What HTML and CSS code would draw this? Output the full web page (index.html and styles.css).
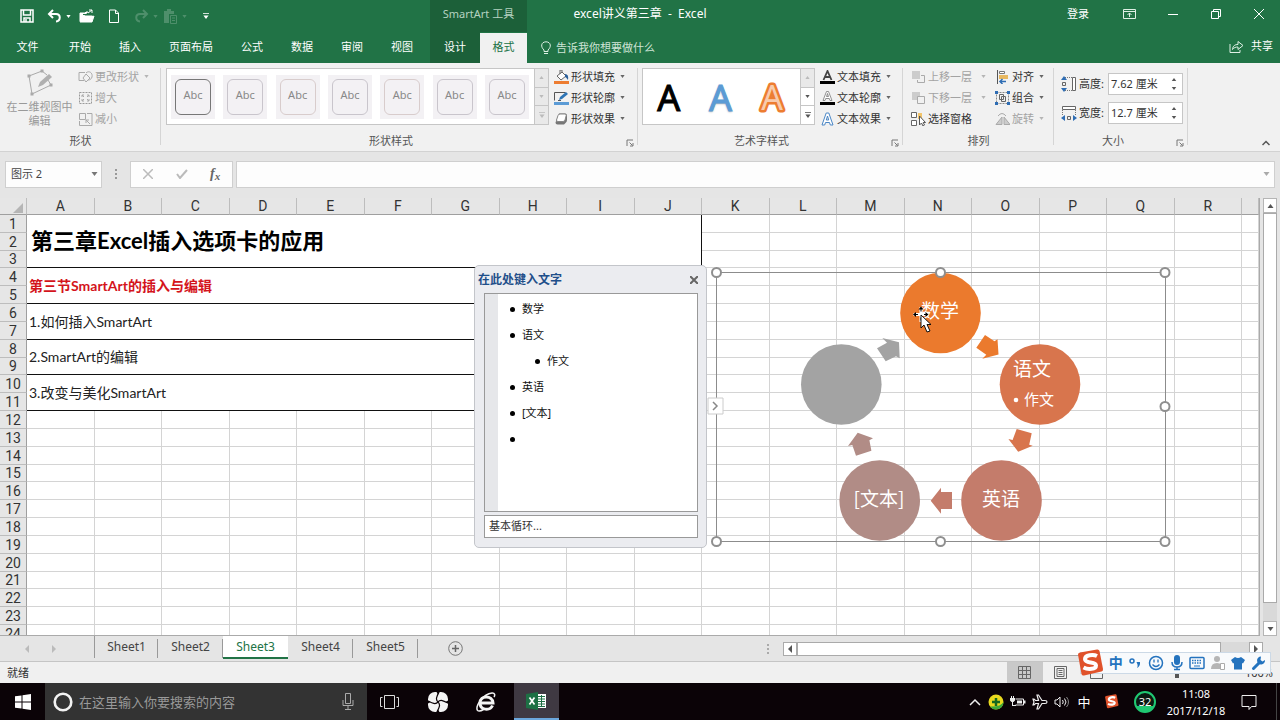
FILE: index.html
```html
<!DOCTYPE html>
<html lang="zh-CN">
<head>
<meta charset="utf-8">
<title>excel讲义第三章 - Excel</title>
<link rel="stylesheet" href="styles.css">
</head>
<body>
<svg class="sprite" aria-hidden="true">
  <symbol id="launcher" viewBox="0 0 8 8"><path d="M1 7V1h6M3.500 3.500l3 3M7 4v3H4" fill="none" stroke="#777"/></symbol>
  <symbol id="down" viewBox="0 0 7 4"><path d="M0.500 0h6L3.500 4z" fill="currentColor"/></symbol>
  <symbol id="up" viewBox="0 0 7 4"><path d="M0.500 4h6L3.500 0z" fill="currentColor"/></symbol>
  <symbol id="more" viewBox="0 0 7 7"><path d="M0 0.500h7" stroke="currentColor"/><path d="M0.500 3h6L3.500 7z" fill="currentColor"/></symbol>
  <symbol id="sogou" viewBox="0 0 28 28"><path d="M2 5.500Q2 4 4 3.500L21 0.500q2-.3 2.500 1.500l3.500 18q.3 2-1.500 2.500L8 26.500q-2 .3-2.500-1.500z" fill="#e0522b"/><path d="M21 7c-4-2-12-1-12 3.200 0 4.500 11 2 11 6.200 0 4-8 4.500-12.500 2" fill="none" stroke="#fff" stroke-width="4"/></symbol>
</svg>

<header class="header">
  <div class="titlebar">
    <div class="title-left">
      <div class="qat">
        <button class="q-btn q-save" aria-label="保存"><svg width="14" height="14" viewBox="0 0 14 14"><path d="M1 1h12v12H1zM3.500 1v5h7V1M4 13V9h6v4M6 10v3" fill="none" stroke="#fff" stroke-width="1.500"/></svg></button>
        <button class="q-btn q-undo" aria-label="撤消"><svg width="15" height="14" viewBox="0 0 15 14"><path d="M6 1L2 5l4 4M2.500 5H9c5 0 5 7 0 7.500" fill="none" stroke="#fff" stroke-width="2"/></svg><svg width="5" height="3"><use href="#down"/></svg></button>
        <button class="q-btn q-open" aria-label="打开"><svg width="16" height="14" viewBox="0 0 16 14"><path d="M1 12V4h5l1-1h2M3 7h12l-2 6H1z" fill="#fff" stroke="#fff"/><path d="M4 5.500h10V7" fill="none" stroke="#217346"/><path d="M9 4l4-3m-3 0h3v3" fill="none" stroke="#fff"/></svg></button>
        <button class="q-btn q-new" aria-label="新建"><svg width="12" height="14" viewBox="0 0 12 14"><path d="M1.500 1h6l3 3v9.500h-9zM7.500 1v3.500h3" fill="none" stroke="#fff"/></svg></button>
        <button class="q-btn q-redo dim" aria-label="恢复" disabled><svg width="15" height="14" viewBox="0 0 15 14"><path d="M9 1l4 4-4 4M12.500 5H6c-5 0-5 7 0 7.500" fill="none" stroke="#fff" stroke-width="2"/></svg><svg width="5" height="3"><use href="#down"/></svg></button>
        <button class="q-btn q-paste dim" aria-label="粘贴" disabled><svg width="15" height="15" viewBox="0 0 15 15"><path d="M1 2h10v3H6v9H1zM4 0h4v3H4z" fill="#fff"/><path d="M7.500 6.500h6v8h-6zM9 9h3M9 11.500h3" fill="none" stroke="#fff"/></svg><svg width="5" height="3"><use href="#down"/></svg></button>
        <button class="q-btn q-more" aria-label="自定义"><svg width="6" height="6"><use href="#more"/></svg></button>
      </div>
      <div class="context-title">SmartArt 工具</div>
    </div>
    <div class="doc-title">excel讲义第三章&nbsp; -&nbsp; Excel</div>
    <div class="window-ctl">
      <button class="login">登录</button>
      <button class="w-btn" aria-label="功能区显示选项"><svg width="13" height="10" viewBox="0 0 13 10"><path d="M.5.5h12v9H.5zM.5 2.500h12M6.500 8V4M4.500 6l2-2 2 2" fill="none" stroke="#dff0e5"/></svg></button>
      <button class="w-btn" aria-label="最小化"><svg width="10" height="10"><path d="M0 5.500h10" stroke="#fff"/></svg></button>
      <button class="w-btn" aria-label="还原"><svg width="10" height="10" viewBox="0 0 10 10"><path d="M.5 2.500h7v7h-7zM2.500 2.500v-2h7v7h-2" fill="none" stroke="#fff"/></svg></button>
      <button class="w-btn" aria-label="关闭"><svg width="10" height="10"><path d="M0 0l10 10M10 0L0 10" stroke="#fff"/></svg></button>
    </div>
  </div>
  <nav class="tabs">
    <button class="tab file">文件</button><button class="tab">开始</button><button class="tab">插入</button><button class="tab">页面布局</button><button class="tab">公式</button><button class="tab">数据</button><button class="tab">审阅</button><button class="tab">视图</button>
    <button class="tab context">设计</button><button class="tab active">格式</button>
    <button class="tell"><svg width="10" height="14" viewBox="0 0 10 14"><path d="M3 10.500V9C-.5 6-.2 1 5 .8 10.200 1 10.500 6 7 9v1.500zM3 12.500h4" fill="none" stroke="#dff0e5"/></svg>告诉我你想要做什么</button>
    <button class="share"><svg width="15" height="13" viewBox="0 0 15 13"><path d="M1 4v8.500h10V10M3.500 9.500C4 5.500 6 4.500 9 4.500V1.500l5 4-5 4V7C6.500 7 5 7.500 3.500 9.500z" fill="none" stroke="#dff0e5"/></svg>共享</button>
  </nav>
</header>

<section class="ribbon">
  <div class="group g-shape">
    <div class="group-body">
      <button class="big-btn" disabled>
        <svg width="27" height="28" viewBox="0 0 27 28"><path d="M3 7l13-5M3 7l3 18 19-9M16 2l5 4M22 11l3 5" fill="none" stroke="#aaa"/><path d="M1.500 5.500h3v3h-3zM14.500.500h3v3h-3zM4.500 23.500h3v3h-3zM23.500 14.500h3v3h-3z" fill="#aaa"/><path d="M12 18l2-5 9-8 3 3-9 8z" fill="#b0b0b0"/></svg>
        <span>在二维视图中编辑</span>
      </button>
      <div class="stack">
        <button class="row-btn" disabled><svg class="ic" viewBox="0 0 15 14"><path d="M6 10.500H1v-8h6M8 3c3-3 7 0 6 4-1 3-3 3-4 3M8 4l4 4-4 4-3-4z" fill="none" stroke="#aaa"/></svg>更改形状<svg class="caret"><use href="#down"/></svg></button>
        <button class="row-btn" disabled><svg class="ic" viewBox="0 0 15 14"><path d="M1.500 1.500h12v11h-12z" fill="none" stroke="#999" stroke-dasharray="2 1"/><path d="M4 4l2 2M11 4L9 6M4 10l2-2M11 10L9 8M4 6V4h2M9 4h2v2M4 8v2h2M9 10h2V8" fill="none" stroke="#aaa"/></svg>增大</button>
        <button class="row-btn" disabled><svg class="ic" viewBox="0 0 15 14"><path d="M9 1.500h5v12H1.500V9M1.500 1.500h6v6h-6zM8 8l4 4M8 11V8h3" fill="none" stroke="#aaa"/></svg>减小</button>
      </div>
    </div>
    <div class="group-name">形状</div>
  </div>
  <div class="group g-styles">
    <div class="group-body">
      <div class="gallery">
        <div class="tiles">
          <button class="tile t1">Abc</button><button class="tile">Abc</button><button class="tile t3">Abc</button><button class="tile">Abc</button><button class="tile t3">Abc</button><button class="tile">Abc</button><button class="tile">Abc</button>
        </div>
        <div class="spin off"><button aria-label="上"><svg width="5" height="3"><use href="#up"/></svg></button><button aria-label="下"><svg width="5" height="3"><use href="#down"/></svg></button><button aria-label="其他"><svg width="6" height="6"><use href="#more"/></svg></button></div>
      </div>
      <div class="stack">
        <button class="row-btn"><svg class="ic" viewBox="0 0 15 14"><path d="M0 11h15v3H0z" fill="#ed7d31"/><path d="M3 6l5-4 4 4-5 4zM6 4V0h2v3" fill="#fff" stroke="#666"/><path d="M11 4q4 0 3 6-2-3-3-3z" fill="#2b5f99"/></svg>形状填充<svg class="caret"><use href="#down"/></svg></button>
        <button class="row-btn"><svg class="ic" viewBox="0 0 15 14"><path d="M0 11h15v3H0z" fill="#5b9bd5"/><path d="M.5 9.500v-8h11M4 9.500h3" fill="none" stroke="#555"/><path d="M5 9l1-3 6-5 2 2-6 5z" fill="#2e75b6"/></svg>形状轮廓<svg class="caret"><use href="#down"/></svg></button>
        <button class="row-btn"><svg class="ic" viewBox="0 0 15 14"><path d="M5 1.500h6q2 0 2 2V8q0 2-1.500 3l-1.500 1.500H3.500q-2 0-2-2z" fill="#777"/><path d="M6 2h5q1.500 0 1.200 1.500L11 8q-.5 1.500-2 1.500H4Q2.200 9.500 2.500 8L4 3.500Q4.500 2 6 2z" fill="#fff" stroke="#888"/></svg>形状效果<svg class="caret"><use href="#down"/></svg></button>
      </div>
    </div>
    <div class="group-name">形状样式</div>
    <svg class="launch"><use href="#launcher"/></svg>
  </div>
  <div class="group g-wordart">
    <div class="group-body">
      <div class="gallery">
        <div class="letters"><button class="wa black">A</button><button class="wa blue">A</button><button class="wa orange"><svg width="36" height="40" viewBox="0 0 36 40"><text x="18" y="32" text-anchor="middle">A</text></svg></button></div>
        <div class="spin"><button class="gray" aria-label="上"><svg width="5" height="3"><use href="#up"/></svg></button><button aria-label="下"><svg width="5" height="3"><use href="#down"/></svg></button><button aria-label="其他"><svg width="6" height="6"><use href="#more"/></svg></button></div>
      </div>
      <div class="stack">
        <button class="row-btn"><svg class="ic" viewBox="0 0 15 14"><path d="M0 11h15v3H0z"/><path d="M3.500 10L7.500 1l4 9M5 7h5" fill="none" stroke="#444" stroke-width="1.800"/></svg>文本填充<svg class="caret"><use href="#down"/></svg></button>
        <button class="row-btn"><svg class="ic" viewBox="0 0 15 14"><path d="M0 11h15v3H0z"/><path d="M3 9.500L6.500.5h2l3.500 9H10L9.300 7.500H5.700L5 9.500zM6.500 5.500h2l-1-3z" fill="#fff" stroke="#777" stroke-width=".8"/></svg>文本轮廓<svg class="caret"><use href="#down"/></svg></button>
        <button class="row-btn"><svg class="ic" viewBox="0 0 15 14"><path d="M2 13L6.200 1h2.600L13 13h-2.700l-.8-2.500H5.500L4.700 13zM6.300 8h2.400L7.500 4z" fill="#fff" stroke="#4a86c5"/></svg>文本效果<svg class="caret"><use href="#down"/></svg></button>
      </div>
    </div>
    <div class="group-name">艺术字样式</div>
    <svg class="launch"><use href="#launcher"/></svg>
  </div>
  <div class="group g-arrange">
    <div class="group-body">
      <div class="stack">
        <button class="row-btn" disabled><svg class="ic" viewBox="0 0 15 14"><path d="M1 1h8v8H1z" fill="#ccc"/><path d="M10 5.500h3.500v7h-7V10" fill="none" stroke="#aaa"/></svg>上移一层<svg class="caret far"><use href="#down"/></svg></button>
        <button class="row-btn" disabled><svg class="ic" viewBox="0 0 15 14"><path d="M1 1h8v8H1z" fill="#ccc"/><path d="M6.500 5.500h7v7h-7z" fill="#f1f1f1" stroke="#aaa"/></svg>下移一层<svg class="caret far"><use href="#down"/></svg></button>
        <button class="row-btn"><svg class="ic" viewBox="0 0 15 14"><path d="M7 1h4v6H7z" fill="#f3c56b"/><path d="M.5.5h5v5h-5zM.5 8.500h5v5h-5z" fill="#fff" stroke="#666"/><path d="M8.500 4v9l2-2 1.500 3 1.500-1-1.300-2.500h2.300z" fill="#fff" stroke="#555"/></svg>选择窗格</button>
      </div>
      <div class="stack second">
        <button class="row-btn"><svg class="ic" viewBox="0 0 15 14"><path d="M2.500 0v14" stroke="#555"/><path d="M4.500 1.500h5v2h-5z" fill="#fff" stroke="#777"/><path d="M4 5h9v4H4z" fill="#e8b860"/><path d="M11 11.500H5M7.500 9L5 11.500 7.500 14" fill="none" stroke="#2e6db4" stroke-width="1.500"/></svg>对齐<svg class="caret"><use href="#down"/></svg></button>
        <button class="row-btn"><svg class="ic" viewBox="0 0 15 14"><path d="M1.500 1.500h12v11h-12z" fill="none" stroke="#888" stroke-dasharray="2 1"/><path d="M4.500 3.500h4v5h-4zM6.500 5.500h4v5h-4z" fill="none" stroke="#666"/><path d="M0 0h3v3H0zM12 0h3v3h-3zM0 11h3v3H0zM12 11h3v3h-3z" fill="#2e6db4"/></svg>组合<svg class="caret"><use href="#down"/></svg></button>
        <button class="row-btn" disabled><svg class="ic" viewBox="0 0 15 14"><path d="M1 12.500h6V5zM9 5v7.500h6z" fill="#ccc" stroke="#aaa"/><path d="M3 4q4-5 8 0" fill="none" stroke="#aaa"/></svg>旋转<svg class="caret"><use href="#down"/></svg></button>
      </div>
    </div>
    <div class="group-name">排列</div>
  </div>
  <div class="group g-size">
    <div class="group-body fields">
      <div class="field"><label for="h"><svg width="16" height="16" viewBox="0 0 16 16"><path d="M11.500 1.500h3v13h-3z" fill="#fff" stroke="#666"/><path d="M4 1.500h7M4 14.500h7" stroke="#777" stroke-dasharray="1 1"/><path d="M1.500 6.500h3v3h-3z" fill="none" stroke="#666"/><path d="M3 0l3 4H0zM3 16l3-4H0z" fill="#2e6db4"/></svg>高度:</label><span class="num"><input id="h" value="7.62 厘米"><span class="arrows"><svg width="6" height="3"><use href="#up"/></svg><svg width="6" height="3"><use href="#down"/></svg></span></span></div>
      <div class="field"><label for="w"><svg width="16" height="16" viewBox="0 0 16 16"><path d="M1.500 1.500h13v3h-13z" fill="#fff" stroke="#666"/><path d="M1.500 5v5M14.500 5v5" stroke="#777" stroke-dasharray="1 1"/><path d="M6.500 11.500h3v3h-3z" fill="none" stroke="#666"/><path d="M0 13l4-3v6zM16 13l-4-3v6z" fill="#2e6db4"/></svg>宽度:</label><span class="num"><input id="w" value="12.7 厘米"><span class="arrows"><svg width="6" height="3"><use href="#up"/></svg><svg width="6" height="3"><use href="#down"/></svg></span></span></div>
    </div>
    <div class="group-name">大小</div>
    <svg class="launch"><use href="#launcher"/></svg>
  </div>
  <button class="collapse" aria-label="折叠功能区"><svg width="8" height="6"><path d="M.5 5L4 1.500 7.500 5" fill="none" stroke="#555" stroke-width="1.500"/></svg></button>
</section>

<section class="formula-row">
  <div class="name-box"><input aria-label="名称框" value="图示 2"><svg width="7" height="4"><use href="#down"/></svg></div>
  <svg class="dots" width="2" height="10"><path d="M1 0v10" stroke="#999" stroke-width="2" stroke-dasharray="2 2"/></svg>
  <div class="fx-box">
    <button aria-label="取消"><svg width="10" height="10"><path d="M0 0l10 10M10 0L0 10" stroke="#bbb" stroke-width="1.500"/></svg></button>
    <button aria-label="输入"><svg width="12" height="10"><path d="M1 5l3 4 7-8" fill="none" stroke="#bbb" stroke-width="2"/></svg></button>
    <button class="fx">f<small>x</small></button>
  </div>
  <div class="formula"><input aria-label="编辑栏"><svg width="7" height="4"><use href="#down"/></svg></div>
</section>

<main class="workbook">
  <div class="grid-wrap">
    <table class="sheet" id="sheet"></table>

    <svg class="diagram" width="480" height="300" viewBox="0 0 480 300">
      <path d="M16.500 17.500h449v269h-449z" fill="none" stroke="#8c8c8c"/>
      <g fill="#eb7a2d"><circle cx="240.500" cy="58" r="40.300"/><path d="M285 80l9.500 6.300 3-2 1 15.200-16.200 4.200 4-4-10-7z"/></g>
      <g fill="#d8754d"><circle cx="340" cy="129.500" r="40.300"/><path d="M316.700 174l15 4.300-2.500 11.500 3.500 1-14.500 6-9.800-12.800 4.200 1z"/></g>
      <g fill="#c47c6b"><circle cx="301.500" cy="245.500" r="40.300"/><path d="M252 237v17h-11v4.700L230.700 245.700 241 232.700V237z"/></g>
      <g fill="#b18c86"><circle cx="179.700" cy="245.500" r="40.300"/><path d="M157.700 177.700l15.300 5.600-3.600 2 2 10.400-15.400 5-3.700-10.700-4.300 1z"/></g>
      <g fill="#a3a3a3"><circle cx="141.300" cy="129.500" r="40.300"/><path d="M182.300 83l16.700 4.300.7 16-3.700-2-10.300 5-8.700-13 10-5.600z"/></g>
      <g class="node-text">
        <text x="240" y="63" text-anchor="middle">数学</text>
        <text x="313" y="121">语文</text>
        <circle cx="316" cy="145" r="2.300"/><text class="sub" x="324" y="150">作文</text>
        <text x="301" y="251" text-anchor="middle">英语</text>
        <text x="179" y="251" text-anchor="middle">[文本]</text>
      </g>
      <path d="M8 143h15v16H8z" fill="#fff" stroke="#ccc"/><path d="M13 147l4 4-4 4" fill="none" stroke="#888" stroke-width="1.500"/>
      <g fill="#fff" stroke="#8f8f8f" stroke-width="2"><circle cx="16.500" cy="17.500" r="4.500"/><circle cx="240.500" cy="17.500" r="4.500"/><circle cx="465" cy="17.500" r="4.500"/><circle cx="465" cy="151.500" r="4.500"/><circle cx="16.500" cy="286.500" r="4.500"/><circle cx="240.500" cy="286.500" r="4.500"/><circle cx="465" cy="286.500" r="4.500"/></g>
      <path d="M213.500 59.500h15M221 52v15" stroke="#fff" stroke-width="3"/>
      <path d="M215 59.500h12M221 53.500v12" stroke="#000" stroke-dasharray="3 6 3"/>
      <path d="M213 59.500l3-2.500v5zM228.500 59.500l-3-2.500v5zM221 51.500l-2.500 3h5z"/>
      <path d="M221 60v13l3-3 3 7 3-1-3-6.500h4z" fill="#fff" stroke="#000" stroke-width=".9"/>
    </svg>

    <aside class="text-pane">
      <div class="pane-head"><span>在此处键入文字</span><button aria-label="关闭"><svg width="8" height="8"><path d="M0 0l8 8M8 0L0 8" stroke="#666" stroke-width="2"/></svg></button></div>
      <ul class="pane-list"><li>数学</li><li>语文</li><li class="sub-item">作文</li><li>英语</li><li>[文本]</li><li></li></ul>
      <div class="pane-foot">基本循环...</div>
    </aside>
  </div>
  <div class="vscroll">
    <button aria-label="向上"><svg width="7" height="4"><use href="#up"/></svg></button>
    <div class="v-thumb"></div><div class="v-space"></div>
    <button aria-label="向下"><svg width="7" height="4"><use href="#down"/></svg></button>
  </div>
</main>

<footer class="sheet-bar">
  <div class="sheet-nav"><svg width="5" height="8"><path d="M4 0v8L0 4z" fill="#bbb"/></svg><svg width="5" height="8"><path d="M0 0v8l4-4z" fill="#bbb"/></svg></div>
  <button class="sheet-tab">Sheet1</button><button class="sheet-tab">Sheet2</button><button class="sheet-tab on">Sheet3</button><button class="sheet-tab">Sheet4</button><button class="sheet-tab">Sheet5</button>
  <button class="add" aria-label="新工作表"><svg width="15" height="15"><circle cx="7.500" cy="7.500" r="6.800" fill="none" stroke="#777"/><path d="M4 7.500h7M7.500 4v7" stroke="#666" stroke-width="1.500"/></svg></button>
  <svg class="dots right" width="2" height="10"><path d="M1 0v10" stroke="#aaa" stroke-width="2" stroke-dasharray="2 2"/></svg>
  <div class="hscroll">
    <button aria-label="向左"><svg width="5" height="8"><path d="M4 0v8L0 4z" fill="#555"/></svg></button><div class="h-thumb"></div><div class="h-space"></div><button aria-label="向右"><svg width="5" height="8"><path d="M0 0v8l4-4z" fill="#555"/></svg></button>
  </div>
</footer>

<div class="status">
  <span>就绪</span>
  <div class="views">
    <button class="view on" aria-label="普通"><svg width="13" height="13"><path d="M.5.5h12v12H.5zM4.500 0v13M8.500 0v13M0 4.500h13M0 8.500h13" fill="none" stroke="#666"/></svg></button>
    <button class="view" aria-label="页面布局"><svg width="13" height="13"><path d="M.5.5h12v12H.5zM3 2.500h7v8H3zM4.500 4.500h4M4.500 6.500h4M4.500 8.500h4" fill="none" stroke="#666"/></svg></button>
    <button class="view" aria-label="分页预览"><svg width="13" height="13"><path d="M.5.5h12v12H.5z" fill="none" stroke="#666"/></svg></button>
  </div>
  <svg class="zoom-bar" width="128" height="10"><path d="M0 5.500h8M14 5.500h106M122 5.500h6" stroke="#888"/><path d="M66 1h4v9h-4z" fill="#555"/></svg>
  <span class="zoom">100%</span>
</div>

<div class="ime">
  <svg class="ime-logo" width="28" height="28"><use href="#sogou"/></svg>
  <b>中</b>
  <svg viewBox="0 0 16 16"><circle cx="5" cy="6" r="2" fill="none" stroke="#2473be" stroke-width="1.500"/><path d="M9.500 7h3.500q.5 4-3 6 1-2 .5-3.500z" fill="#2473be"/></svg>
  <svg viewBox="0 0 16 16"><circle cx="8" cy="8" r="6.500" fill="none" stroke="#2473be" stroke-width="1.500"/><path d="M6 4.500v3M10 4.500v3M4.500 9.500q3.500 4 7 0" fill="none" stroke="#2473be" stroke-width="1.300"/></svg>
  <svg viewBox="0 0 16 16"><rect x="5" y="0" width="6" height="10" rx="3" fill="#2473be"/><path d="M3 7q0 5 5 5t5-5M8 12v3M5 14.500h6" fill="none" stroke="#2473be" stroke-width="1.500"/></svg>
  <svg viewBox="0 0 16 16"><rect x="1" y="2.500" width="14" height="11" rx="1" fill="none" stroke="#2473be" stroke-width="1.500"/><path d="M3 5.500h10M3 8h10" stroke="#2473be" stroke-width="1.500" stroke-dasharray="1.500 1"/><path d="M5 11h6" stroke="#2473be"/></svg>
  <svg viewBox="0 0 16 16"><circle cx="7" cy="4" r="3" fill="#b5b5b5"/><path d="M1 14q0-6 6-6t6 6z" fill="#b5b5b5"/><path d="M10.500 8.500h4v6h-4z" fill="#fff" stroke="#aaa"/></svg>
  <svg viewBox="0 0 16 16"><path d="M5 2q3 2 6 0l4 3-2 3.500-1-.5v6.500H4V8l-1 .5L1 5z" fill="#2473be"/></svg>
  <svg viewBox="0 0 16 16"><path d="M2.500 13.500L9 7" stroke="#2473be" stroke-width="3" stroke-linecap="round"/><path d="M14 5a4 4 0 1 1-4-3.500L9.500 5l2 1.500z" fill="#2473be"/></svg>
</div>

<div class="taskbar">
  <button class="start" aria-label="开始"><svg width="16" height="16"><path d="M0 2.300L6.500 1.400v6.100H0zM7.500 1.200L16 0v7.500H7.500zM0 8.500h6.500v6.100L0 13.700zM7.500 8.500H16V16l-8.500-1.200z" fill="#fff"/></svg></button>
  <div class="search">
    <svg width="20" height="20"><circle cx="10" cy="10" r="8.300" fill="none" stroke="#f2f2f2" stroke-width="2.600"/></svg>
    <input aria-label="搜索" placeholder="在这里输入你要搜索的内容">
    <svg width="12" height="17" viewBox="0 0 12 17"><path d="M3.500.5h5v10h-5zM1 7v5.500h10V7M6 13v3M3 16.500h6" fill="none" stroke="#aaa"/></svg>
  </div>
  <button class="task" aria-label="任务视图"><svg width="19" height="14"><path d="M4.500.5h10v13h-10zM2.500 2.500h-2v9h2M16.500 2.500h2v9h-2" fill="none" stroke="#ddd"/></svg></button>
  <button class="task" aria-label="浏览器"><svg width="20" height="20" viewBox="0 0 20 20"><rect width="20" height="20" rx="7" fill="#f4f4f4"/><path d="M10 10C7 7.500 9 4 11 0M10 10c2.500-3 6-1 10 1M10 10c3 2.500 1 6-1 10M10 10c-2.500 3-6 1-10-1" fill="none" stroke="#0b0307" stroke-width="1.200"/><path d="M8.500 0h3L10 2.500zM20 8.500v3L17.500 10zM8.500 20h3L10 17.500zM0 8.500v3L2.500 10z" fill="#0b0307"/></svg></button>
  <button class="task" aria-label="Internet Explorer"><svg width="20" height="20" viewBox="0 0 20 20"><path d="M16.500 13.500C14 19 4 18.500 4 11c0-8 12.500-8 13 0H5" fill="none" stroke="#f4f4f4" stroke-width="3"/><path d="M1.500 18.500C-1 14 7 2 16 1c3-.2 3.200 2 2 4M1.500 18.500q2 1.500 6-1" fill="none" stroke="#f4f4f4" stroke-width="1.500"/></svg></button>
  <button class="task excel" aria-label="Excel"><svg width="21" height="18" viewBox="0 0 21 18"><path d="M11 2h9v14h-9z" fill="#fff"/><path d="M12 4.500h7M12 7h7M12 9.500h7M12 12h7M12 14.500h7M15.500 3v12" stroke="#1d7044"/><path d="M0 2l12-2v18L0 16z" fill="#1d7044"/><path d="M3.500 5.500l5 7M8.500 5.500l-5 7" stroke="#fff" stroke-width="1.700"/></svg></button>
  <div class="tray">
    <svg width="12" height="8"><path d="M1 7l5-5 5 5" fill="none" stroke="#eee" stroke-width="1.500"/></svg>
    <svg width="16" height="16"><circle cx="8" cy="8" r="7.500" fill="#e8d91e"/><path d="M2 12.500A7.500 7.500 0 0 0 15.500 8q-3 5-13.500 4.500z" fill="#3aa83a"/><path d="M8 4v8M4 8h8" stroke="#14691f" stroke-width="2.500"/></svg>
    <svg width="16" height="12"><path d="M5.500 3h8v6h-8" fill="none" stroke="#eee"/><path d="M7 4.500h5v3H7zM14 4.500h1.500v3H14zM0 2h5v2.500L3.500 6h-2L0 4.500zM1 0h1v2H1zM3 0h1v2H3zM2 6h1v3h3v1H2z" fill="#eee"/></svg>
    <svg width="16" height="16"><path d="M15 8q0-1.500-2-1.500h-3L6.500 1H5l1.500 5.500h-3L2 5H1l1 3-1 3h1l1.500-1.500h3L5 15h1.500L10 9.500h3q2 0 2-1.500z" fill="none" stroke="#eee" stroke-width="1.200"/></svg>
    <svg width="16" height="12"><path d="M1 4h2l3-3v10L3 8H1zM8.500 4q1.500 2 0 4M10.500 2.500q3 3.500 0 7" fill="none" stroke="#eee"/><path d="M12.500 1q4 5 0 10" fill="none" stroke="#888"/></svg>
    <span class="lang">中</span>
    <svg class="tray-s" width="15" height="15" viewBox="0 0 28 28"><use href="#sogou" width="28" height="28"/></svg>
    <div class="badge">32</div>
    <div class="clock"><div>11:08</div><div>2017/12/18</div></div>
    <svg width="16" height="16"><path d="M1 1.500h14v11h-4.500l-2.500 3v-3H1z" fill="none" stroke="#eee"/></svg>
  </div>
</div>
<script src="script.js"></script>
</body>
</html>
```
FILE: styles.css
```css
* { box-sizing: border-box; }
body {
  margin: 0; height: 100vh; display: flex; flex-direction: column; overflow: hidden;
  font: 11px/16px "Noto Sans", "Noto Sans CJK SC", sans-serif; color: #333; background: #e5e5e5;
}
button, input { font: inherit; color: inherit; background: none; border: 0; padding: 0; margin: 0; outline: 0; }
svg { display: block; flex: none; }
.sprite { position: absolute; width: 0; height: 0; }

/* Header */
.header { background: #217346; color: #fff; flex: none; }
.titlebar { display: grid; grid-template-columns: 1fr auto 1fr; height: 32px; }
.title-left { display: flex; }
.qat { width: 430px; display: flex; align-items: center; padding-left: 20px; }
.q-btn { display: flex; align-items: center; gap: 4px; height: 28px; }
.q-undo { margin-left: 13px; }
.q-open { margin-left: 8px; }
.q-new { margin-left: 13px; }
.q-redo { margin-left: 14px; }
.q-paste { margin-left: 5px; }
.q-more { margin-left: 16px; }
.dim { opacity: .2; }
.context-title { width: 97px; background: #1c6039; color: #b5d3c1; text-align: center; padding-top: 6px; }
.doc-title { padding-top: 6px; font-size: 12px; }
.window-ctl { display: flex; justify-content: flex-end; height: 28px; }
.login { width: 48px; }
.w-btn { width: 43px; display: flex; align-items: center; justify-content: center; }
.w-btn:nth-child(2) { margin-left: 6px; }
.tabs { display: flex; height: 31px; }
.tab { padding: 0 14px 2px; }
.tab.file { width: 55px; }
.tab.context { margin-left: 3px; background: #1c6039; }
.tab.active { background: #f1f1f1; color: #217346; margin-top: 1px; width: 47px; padding: 0 0 3px; }
.tell, .share { display: flex; align-items: center; gap: 5px; color: #cfe4d6; margin-left: 14px; }
.share { margin-left: auto; gap: 7px; color: #fff; padding: 0 7px 3px 0; }

/* Ribbon */
.ribbon { display: flex; height: 89px; flex: none; background: #f1f1f1; border-bottom: 1px solid #d2d2d2; position: relative; }
.group { position: relative; display: flex; flex-direction: column; padding: 3px 5px 0; }
.group::after { content: ""; position: absolute; right: 0; top: 5px; bottom: 6px; border-right: 1px solid #d5d5d5; }
.group-body { display: flex; flex: 1; }
.group-name { text-align: center; color: #555; height: 18px; }
.g-styles .group-name, .g-wordart .group-name { padding-right: 17px; }
.launch { position: absolute; right: 4px; bottom: 4px; width: 8px; height: 8px; }
.g-shape { width: 161px; }
.g-styles { width: 477px; }
.g-wordart { width: 265px; padding-left: 4px; }
.g-arrange { width: 151px; }
.g-size { width: 134px; }
.big-btn { width: 69px; display: flex; flex-direction: column; align-items: center; gap: 3px; line-height: 14px; padding-top: 3px; color: #999; }
.stack { display: flex; flex-direction: column; padding-left: 5px; }
.g-shape .stack { padding-left: 4px; }
.g-arrange .stack:first-child { padding-left: 3px; }
.stack.second { margin-left: 4px; }
.row-btn { display: flex; align-items: center; height: 21px; gap: 2px; white-space: nowrap; }
.row-btn:disabled { color: #a3a3a3; }
.ic { width: 15px; height: 14px; }
.caret { width: 5px; height: 3px; margin-left: 3px; color: #666; }
.row-btn:disabled .caret { color: #b5b5b5; }
.row-btn .caret.far { margin-left: 7px; }
.gallery { display: flex; height: 57px; margin-top: 2px; border: 1px solid #c6c6c6; background: #fff; }
.g-styles .gallery { width: 383px; }
.g-wordart .gallery { width: 173px; }
.tiles { flex: 1; display: flex; justify-content: space-between; align-items: center; padding: 0 5px 0 4px; }
.tile { width: 44px; height: 44px; border: 4px solid #f3f1f4; background: #f3f1f4; position: relative; color: #888; padding-bottom: 4px; }
.tile::after { content: ""; position: absolute; inset: 0; border: 1px solid #c9c5cc; border-radius: 6px; }
.tile.t1::after { border-color: #777; }
.tile.t3::after { border-color: #d8cccc; }
.spin { width: 14px; display: flex; flex-direction: column; border-left: 1px solid #c6c6c6; color: #555; }
.spin button { flex: 1; display: flex; align-items: center; justify-content: center; }
.spin button + button { border-top: 1px solid #c6c6c6; }
.spin.off, .spin .gray { background: #e9e9e9; color: #bbb; }
.letters { flex: 1; display: flex; padding-right: 2px; }
.wa { flex: 1; font-size: 36px; line-height: 50px; padding-top: 2px; }
.black { color: #000; -webkit-text-stroke: 1px #000; }
.blue { color: #5b9bd5; text-shadow: 0 1px 2px #aaa; -webkit-text-stroke: 1px #5b9bd5; }
.orange { display: flex; align-items: center; justify-content: center; }
.orange text { font-size: 34px; fill: #f8cbad; stroke: #ed7d31; stroke-width: 5px; stroke-linejoin: round; paint-order: stroke; }
.fields { flex-direction: column; gap: 7px; padding-top: 7px; }
.field { display: flex; justify-content: space-between; height: 22px; padding-left: 2px; }
.field label { display: flex; align-items: center; gap: 2px; }
.num { width: 75px; display: flex; align-items: center; border: 1px solid #c6c6c6; background: #fff; }
.num input { width: 58px; padding-left: 2px; }
.arrows { display: flex; flex-direction: column; gap: 6px; padding-left: 4px; color: #555; }
.fields + .group-name { padding-right: 16px; }
.collapse { margin-left: auto; align-self: flex-end; padding: 6px 10px 5px; }

/* Formula row */
.formula-row { display: flex; align-items: center; height: 46px; flex: none; padding: 0 5px 2px; }
.name-box, .fx-box, .formula { height: 27px; background: #fdfdfd; border: 1px solid #cfcfcf; display: flex; align-items: center; }
.name-box { width: 97px; padding: 0 4px 0 5px; color: #777; }
.name-box input { width: 80px; color: #444; }
.formula-row .dots { margin: 0 13px; }
.fx-box { width: 103px; }
.fx-box button { flex: 1; display: flex; justify-content: center; align-items: center; }
.fx { font: italic bold 14px "Liberation Serif", serif; color: #666; }
.fx small { font-size: 11px; padding-top: 3px; }
.formula { flex: 1; margin-left: 3px; padding-right: 4px; color: #aaa; }
.formula input { flex: 1; }

/* Worksheet */
.workbook { flex: 1; min-height: 0; display: flex; }
.grid-wrap { flex: 1; min-width: 0; position: relative; overflow: hidden; border-right: 1px solid #aaa; border-bottom: 1px solid #aaa; }
.sheet { table-layout: fixed; width: 100%; border-collapse: separate; border-spacing: 0; background: #fff; font: 14px/16px Lato, "Noto Sans CJK SC", sans-serif; color: #222; }
.sheet th, .sheet td { padding: 0; border: 0 solid #d4d4d4; border-width: 0 1px 1px 0; overflow: hidden; white-space: nowrap; }
.sheet .c-head { width: 27px; }
.sheet .c-last { width: 17px; }
.sheet tr { height: 18px; }
.sheet tbody tr:nth-child(6n+3) { height: 17px; }
.sheet thead tr { height: 17px; }
.sheet th { background: #e6e6e6; font-family: Roboto, sans-serif; font-weight: normal; border-color: #bdbdbd; color: #333; }
.sheet thead th { border-bottom-color: #9f9f9f; line-height: 15px; padding-top: 1px; }
.sheet tbody th { border-right-color: #9f9f9f; line-height: 16px; }
.corner svg { margin: 2px 3px 0 auto; }
.sheet .merged { border-color: #111; text-align: left; vertical-align: middle; padding-left: 2px; }
.sheet .heading { font-size: 22px; line-height: 28px; font-weight: bold; color: #000; padding-left: 4px; }
.sheet .section { font-weight: bold; color: #d4141c; }

.diagram { position: absolute; left: 700px; top: 57px; }
.node-text { fill: #fff; font: 19px "Noto Sans CJK SC", sans-serif; }
.node-text .sub { font-size: 15px; }

.text-pane { position: absolute; left: 474px; top: 67px; width: 233px; height: 283px; padding: 0 8px 9px 9px; display: flex; flex-direction: column; background: #ebecf0; border: 1px solid #c3c5ca; border-radius: 5px; }
.pane-head { display: flex; align-items: center; justify-content: space-between; height: 27px; margin-left: -6px; font-size: 12px; font-weight: bold; color: #1f4f8a; }
.pane-list { flex: 1; list-style: none; margin: 0 0 3px; padding: 2px 0 0 23px; border: 1px solid #999; background: linear-gradient(90deg, #e6e7ea 13px, #fff 13px); color: #111; }
.pane-list li { height: 26px; line-height: 26px; display: flex; align-items: center; }
.pane-list li::before { content: ""; width: 5px; height: 5px; border-radius: 50%; background: #000; margin: 0 7px 0 2px; }
.pane-list .sub-item { padding-left: 25px; }
.pane-foot { height: 23px; line-height: 20px; border: 1px solid #999; background: #fff; padding-left: 4px; }

.vscroll { width: 20px; display: flex; flex-direction: column; align-items: center; color: #555; }
.vscroll button { width: 14px; height: 15px; background: #fff; border: 1px solid #b5b5b5; display: flex; align-items: center; justify-content: center; flex: none; }
.v-thumb { width: 14px; flex: 391; background: #fff; border: 1px solid #aaa; }
.v-space { width: 14px; flex: 18; background: #d9d9d9; }

/* Sheet tabs */
.sheet-bar { display: flex; height: 26px; flex: none; border-bottom: 1px solid #c5c5c5; }
.sheet-nav { width: 94px; display: flex; align-items: center; gap: 22px; padding-left: 25px; }
.sheet-tab { width: 65px; height: 22px; font-size: 12px; color: #444; background: linear-gradient(#999, #999) right 3px / 1px 100% no-repeat; }
.sheet-nav + .sheet-tab { width: 64px; border-left: 1px solid #999; }
.sheet-tab.on { background: #fff; color: #217346; border-bottom: 2px solid #217346; height: 23px; }
.add { margin-left: 30px; }
.dots.right { margin: auto 14px auto auto; }
.hscroll { width: 38%; max-width: 480px; height: 14px; margin: 6px 17px 0 0; display: flex; }
.hscroll button { width: 14px; background: #fff; border: 1px solid #aaa; display: flex; align-items: center; justify-content: center; }
.h-thumb { flex: 424; background: #fff; border: 1px solid #aaa; }
.h-space { flex: 28; background: #dadada; }

/* Status bar */
.status { display: flex; align-items: center; height: 21px; flex: none; background: #f0f0f0; padding: 0 7px; }
.views { margin-left: auto; display: flex; align-self: stretch; }
.view { width: 36px; display: flex; align-items: center; justify-content: center; }
.view.on { background: #c9c9c9; }
.zoom-bar { margin: 0 8px 0 -6px; }

.ime { position: absolute; right: 9px; bottom: 46px; width: 191px; height: 22px; display: flex; align-items: center; justify-content: space-between; padding: 0 3px; background: #f8fafc; border: 1px solid #ccd9e6; }
.ime svg { width: 16px; height: 16px; }
.ime .ime-logo { width: 28px; height: 28px; margin-left: -8px; }
.ime b { font-size: 14px; color: #2473be; }

/* Taskbar */
.taskbar { display: flex; height: 37px; flex: none; background: #0b0307; color: #fff; }
.start { width: 45px; display: flex; align-items: center; justify-content: center; }
.search { width: 322px; background: #333; display: flex; align-items: center; padding: 0 13px 0 8px; gap: 6px; }
.search input { flex: 1; font-size: 13px; }
.search input::placeholder { color: #999; }
.task { width: 45px; margin-right: 3px; display: flex; align-items: center; justify-content: center; }
.excel { background: #3f3942; border-bottom: 2px solid #6ba7dc; margin-left: 3px; }
.tray { margin: 0 3px 0 auto; display: flex; align-items: center; gap: 6px; padding-right: 19px; border-right: 1px solid #444; }
.lang { font-size: 13px; width: 16px; text-align: center; }
.tray svg:first-child { margin-right: 1px; }
.tray-s { margin: 0 9px 0 6px; }
.badge { width: 22px; height: 22px; line-height: 18px; border: 2px solid #20c872; border-radius: 50%; text-align: center; background: linear-gradient(#0b1a12 72%, #20c872 72%); }
.clock { text-align: center; width: 66px; line-height: 17px; margin: 0 6px 0 1px; }
```
FILE: script.js
```js
const letters = "ABCDEFGHIJKLMNOPQR".split("");
const merged = {
  1: { rows: 3, text: "第三章Excel插入选项卡的应用", cls: "heading" },
  4: { rows: 2, text: "第三节SmartArt的插入与编辑", cls: "section" },
  6: { rows: 2, text: "1.如何插入SmartArt", cls: "" },
  8: { rows: 2, text: "2.SmartArt的编辑", cls: "" },
  10: { rows: 2, text: "3.改变与美化SmartArt", cls: "" }
};
let html = '<colgroup><col class="c-head">' + "<col>".repeat(18) + '<col class="c-last"></colgroup>';
html += '<thead><tr><th class="corner"><svg width="10" height="10"><path d="M10 0v10H0z" fill="#b5b5b5"/></svg></th>';
html += letters.map(l => `<th>${l}</th>`).join("") + "<th></th></tr></thead><tbody>";
for (let r = 1; r <= 24; r++) {
  html += `<tr><th>${r}</th>`;
  const m = merged[r];
  if (m) html += `<td class="merged ${m.cls}" colspan="10" rowspan="${m.rows}">${m.text}</td>`;
  html += "<td></td>".repeat(r <= 11 ? 9 : 19) + "</tr>";
}
document.getElementById("sheet").innerHTML = html + "</tbody>";
```
